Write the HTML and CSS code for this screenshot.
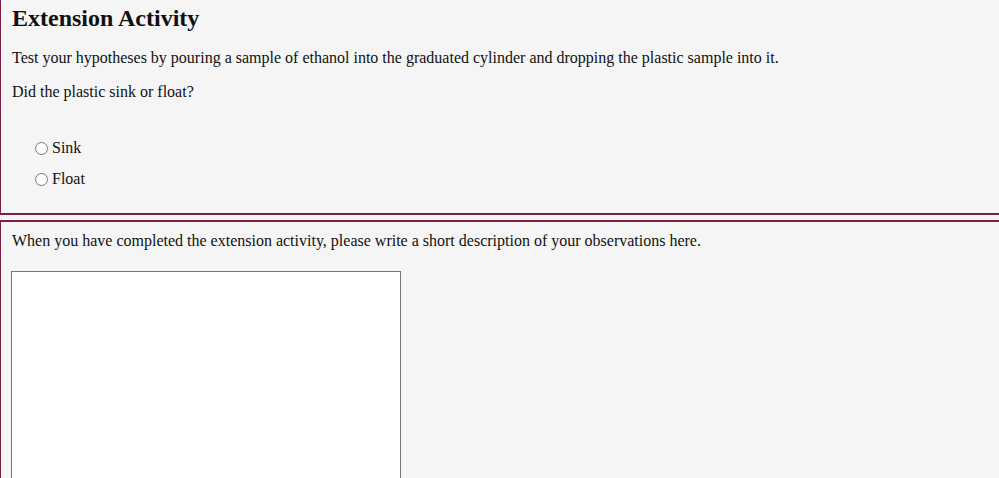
FILE: index.html
```html
<!DOCTYPE html>
<html lang="en">
<head>
    <meta charset="UTF-8">
    <meta name="viewport" content="width=device-width, initial-scale=1.0">
    <title>Extension Activity</title>
    <link rel="stylesheet" href="styles.css">
</head>
<body>
    <section class="panel panel-first">
        <h2>Extension Activity</h2>
        <p>Test your hypotheses by pouring a sample of ethanol into the graduated cylinder and dropping the plastic sample into it.</p>
        <p>Did the plastic sink or float?</p>
        <ul class="choices">
            <li><label><input type="radio" name="result" value="sink">Sink</label></li>
            <li><label><input type="radio" name="result" value="float">Float</label></li>
        </ul>
    </section>

    <section class="panel panel-second">
        <p>When you have completed the extension activity, please write a short description of your observations here.</p>
        <textarea class="notes"></textarea>
    </section>
</body>
</html>
```

FILE: styles.css
```css
/* Base */
* {
    box-sizing: border-box;
}

body {
    margin: 0;
    background-color: #f5f5f5;
    color: #111;
    font-family: "Liberation Serif", "Times New Roman", serif;
    font-size: 16px;
}

/* Panels */
.panel {
    border-left: 1px solid #7a1f45;
    padding: 0 11px;
}

.panel-first {
    border-bottom: 2px solid #7a1f45;
    padding-top: 1px;
    padding-bottom: 12px;
}

.panel-second {
    margin-top: 5px;
    border-top: 2px solid #7a1f45;
    padding-top: 1px;
}

h2 {
    font-size: 24px;
    line-height: 28px;
    margin: 3px 0 17px;
}

p {
    margin: 0 0 16px;
    line-height: 18px;
}

/* Radio list */
.choices {
    list-style: none;
    margin: 0;
    padding: 22px 0 0 23px;
}

.choices li {
    height: 31px;
}

.choices label {
    display: flex;
    align-items: center;
    gap: 4px;
    height: 18px;
}

.choices input {
    margin: 0;
    width: 13px;
    height: 13px;
}

.panel-second p {
    margin-top: 9px;
    margin-bottom: 21px;
}

.notes {
    display: block;
    width: 390px;
    height: 260px;
    margin-left: -1px;
    border: 1px solid #767676;
    background: #fff;
}
```
